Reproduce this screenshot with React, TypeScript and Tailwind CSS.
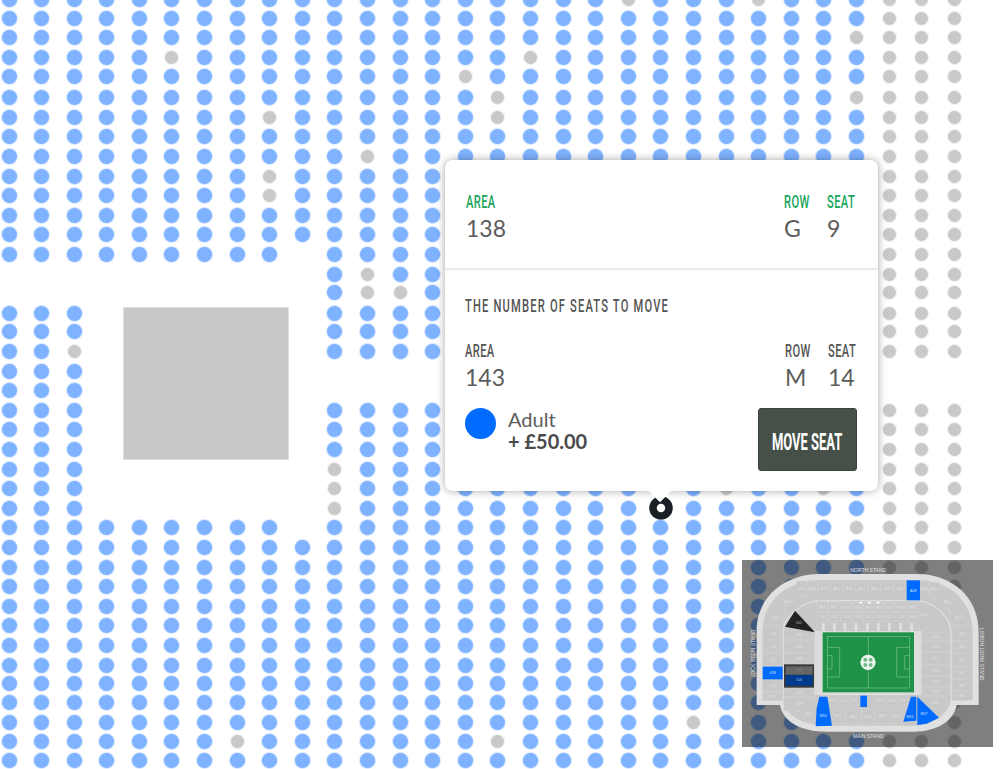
import React from 'react';

// seat map: 40 rows x 30 columns, "row:col" entries for the sold (grey) seats
const ROWS = 40;
const COLS = 30;
const SOLD = new Set([
    '0:19', '0:23', '2:26', '3:5', '3:16', '4:14', '5:15', '5:26', '6:8', '6:15', '8:11', '9:8', '10:8',
    '14:11', '15:11', '15:12', '18:2', '24:10', '25:10', '26:10', '25:22', '25:25', '27:26', '37:21', '38:7', '38:15',
]);

function isGap(r: number, c: number) {
    if (c <= 9 && (r === 14 || r === 15)) return true;
    if (c >= 3 && c <= 9 && r >= 16 && r <= 26) return true;
    if (c === 9 && (r === 13 || r === 27)) return true;
    if (c >= 10 && (r === 19 || r === 20)) return true;
    return false;
}

function Seat({r, c}: { r: number; c: number }) {
    if (isGap(r, c)) return <div/>;
    if (r === 26 && c === 20) {
        return (
            <div className="h-[15px] flex items-center justify-center">
                <svg width="24" height="24" viewBox="0 0 24 24" className="shrink-0">
                    <circle cx="12" cy="12" r="8" fill="none" stroke="#1a1f26" strokeWidth="7.5"/>
                </svg>
            </div>
        );
    }
    const sold = c >= 27 || SOLD.has(r + ':' + c);
    return (
        <div className="h-[15px] flex items-center justify-center">
            {sold
                ? <div className="w-[13px] h-[13px] rounded-full bg-[#c9c9c9] ring-1 ring-[#c9c9c9]/30"/>
                : <div className="w-[15px] h-[15px] rounded-full bg-[#7fb3ff] ring-1 ring-[#7fb3ff]/30"/>}
        </div>
    );
}

// the label font in the picture is a tall, very narrow display face
function Label({text, className, wide}: { text: string; className: string; wide?: boolean }) {
    return (
        <div className={"h-[16px] leading-[16px] text-[18px] font-medium whitespace-nowrap " + className}>
            <span className={"inline-block origin-left scale-x-[.62] font-['Roboto',sans-serif] " + (wide ? "tracking-[1.9px]" : "tracking-[0.6px]")}>{text}</span>
        </div>
    );
}

function Value({text}: { text: string }) {
    return <div className="mt-[5px] h-[28px] leading-[28px] text-[23px] text-[#5c5c5c] font-['Lato',sans-serif]">{text}</div>;
}

type Block = [number, number, number, number, string];

const BLOCKS: Block[] = [
    [170, 78, 32, 44, 'A25'], [204, 78, 28, 44, 'A26'], [234, 78, 36, 44, 'A01'], [272, 78, 36, 44, 'A02'],
    [310, 78, 36, 44, 'A03'], [348, 78, 36, 44, 'A04'], [386, 78, 36, 44, 'A05'], [424, 78, 36, 44, 'A06'],
    [462, 78, 36, 44, 'A07'], [540, 78, 26, 44, 'A09'], [568, 82, 30, 40, 'A10'],
    [230, 143, 33, 26, 'B01'], [265, 143, 33, 26, 'B02'], [300, 146, 33, 24, 'B03'], [335, 146, 33, 24, 'B04'],
    [370, 146, 30, 24, 'B05'], [402, 146, 30, 24, 'B06'], [434, 146, 32, 24, 'B07'], [468, 146, 32, 24, 'B08'], [502, 143, 30, 26, 'B09'],
    [232, 172, 32, 28, 'C01'], [267, 172, 33, 28, 'C02'], [302, 172, 33, 28, 'C03'], [337, 172, 30, 28, 'C04'],
    [369, 172, 30, 28, 'C05'], [401, 172, 30, 28, 'C06'], [433, 172, 32, 28, 'C07'], [467, 172, 32, 28, 'C08'], [501, 172, 32, 28, 'C09'],
    [68, 216, 60, 38, '443'], [68, 256, 60, 36, '444'], [68, 294, 60, 38, '445'], [68, 375, 60, 34, '438'], [68, 411, 60, 26, '437'],
    [132, 224, 90, 30, '502'], [132, 256, 90, 36, '503'], [132, 294, 90, 32, '504'], [132, 400, 90, 24, '507'], [132, 426, 90, 40, '508'],
    [545, 232, 85, 26, '512'], [545, 260, 85, 30, '513'], [545, 292, 85, 36, '514'], [545, 330, 85, 32, '515'],
    [545, 364, 85, 30, '516'], [545, 396, 85, 26, '517'], [545, 424, 75, 38, '518'],
    [636, 216, 60, 40, '464'], [636, 258, 60, 36, '465'], [636, 296, 60, 38, '466'], [636, 336, 60, 36, '467'],
    [636, 374, 60, 34, '468'], [636, 410, 60, 26, '469'],
    [264, 422, 30, 28, 'F50'], [296, 422, 30, 28, 'F51'], [328, 422, 30, 28, 'F52'], [404, 422, 32, 28, 'F55'],
    [438, 422, 32, 28, 'F56'], [472, 422, 30, 28, 'F57'],
    [276, 460, 36, 46, 'M51'], [316, 460, 48, 48, 'M52'], [366, 462, 36, 46, 'M53'], [404, 460, 46, 46, 'M54'], [452, 460, 36, 46, 'M55'],
];

const CORNERS: [string, number, number, string][] = [
    ['132,135 152,98 205,78 205,122 165,135 142,160', 143, 140, 'A24'],
    ['70,210 82,165 122,125 136,160 128,210', 105, 187, 'A23'],
    ['636,210 628,165 598,126 640,150 692,210', 655, 187, 'A12'],
    ['568,122 600,90 645,135 618,160', 622, 140, 'A11'],
    ['536,145 566,150 612,200 546,226 536,226', 553, 178, 'B10'],
    ['172,462 205,426 222,426 222,505 200,500', 205, 477, '509'],
];

function MapLabel({x, y, text, fill}: { x: number; y: number; text: string; fill: string }) {
    return <text x={x} y={y} textAnchor="middle" fontSize="11" fill={fill} fontFamily="Liberation Sans, sans-serif">{text}</text>;
}

function Minimap() {
    return (
        <div className="absolute left-[742px] top-[560px] w-[251px] h-[187px] bg-black/50">
            <svg width="251" height="187" viewBox="6 15 753 561" className="block">
                <path d="M50 450 L50 225 C50 130 130 57 240 57 L530 57 C640 57 716 130 716 230 L716 450 L650 450 C640 500 590 530 520 530 L260 530 C180 530 130 500 120 450 Z" fill="#e0e0e0"/>
                <path d="M68 435 L68 225 C68 140 140 75 240 75 L530 75 C630 75 698 140 698 230 L698 435 L632 435 C625 480 575 512 520 512 L260 512 C190 512 135 480 128 435 Z" fill="#c8c8c8"/>
                <path d="M131 440 L131 215 C135 190 180 140 240 137 L530 137 C590 140 630 190 633 230 L634 435" fill="none" stroke="#dedede" strokeWidth="4"/>
                {CORNERS.map(([points, x, y, label]) => (
                    <g key={label}>
                        <polygon points={points} fill="#c8c8c8" stroke="#d2d2d2" strokeWidth="1.5"/>
                        <MapLabel x={x} y={y + 4} text={label} fill="#e2e2e2"/>
                    </g>
                ))}
                {BLOCKS.map(([x, y, w, h, label]) => (
                    <g key={label}>
                        <rect x={x} y={y} width={w} height={h} fill="#c8c8c8" stroke="#d2d2d2" strokeWidth="1.5"/>
                        <MapLabel x={x + w / 2} y={y + h / 2 + 4} text={label} fill="#e2e2e2"/>
                    </g>
                ))}
                {[250, 283, 315, 348, 382, 415, 448, 482, 515].map(x => (
                    <rect key={x} x={x - 4} y={204} width={8} height={24} fill="#e0e0e0"/>
                ))}
                {[362, 388, 414].map(x => (
                    <polygon key={x} points={`${x - 7},141 ${x + 7},141 ${x},147`} fill="#ffffff"/>
                ))}

                {/* blue = seats available in this block, black = current block */}
                <rect x="500" y="76" width="40" height="60" fill="#006bff"/>
                <MapLabel x={520} y={110} text="A08" fill="#cfe2ff"/>
                <rect x="68" y="335" width="60" height="38" fill="#006bff"/>
                <MapLabel x={98} y={358} text="439" fill="#cfe2ff"/>
                <polygon points="238,425 262,425 276,512 227,514 230,460" fill="#006bff"/>
                <MapLabel x={250} y={487} text="M50" fill="#cfe2ff"/>
                <rect x="361" y="422" width="20" height="34" fill="#006bff"/>
                <polygon points="513,425 529,425 529,497 490,500" fill="#006bff"/>
                <MapLabel x={510} y={488} text="M56" fill="#cfe2ff"/>
                <polygon points="532,425 597,488 560,506 532,510" fill="#006bff"/>
                <MapLabel x={552} y={479} text="M57" fill="#cfe2ff"/>
                <polygon points="165,167 225,232 135,215" fill="#222222"/>
                <MapLabel x={177} y={208} text="501" fill="#bbbbbb"/>

                <rect x="132" y="328" width="90" height="70" fill="#3a3a3a"/>
                <rect x="137" y="334" width="81" height="25" fill="#666666"/>
                <rect x="137" y="360" width="81" height="32" fill="#003a8c"/>
                <MapLabel x={178} y={348} text="505" fill="#8a8a8a"/>
                <MapLabel x={178} y={379} text="506" fill="#a9c4ea"/>

                <rect x="224" y="228" width="320" height="192" fill="#dcdcdc"/>
                <rect x="248" y="232" width="274" height="180" fill="#1f9247"/>
                <g fill="none" stroke="#7cc394" strokeWidth="2">
                    <rect x="262" y="245" width="246" height="154"/>
                    <line x1="385" y1="245" x2="385" y2="399"/>
                    <path d="M262 277 L299 277 L299 366 L262 366"/>
                    <path d="M262 302 L276 302 L276 342 L262 342"/>
                    <path d="M508 277 L470 277 L470 366 L508 366"/>
                    <path d="M508 302 L494 302 L494 342 L508 342"/>
                </g>
                <circle cx="384" cy="322" r="23" fill="#eef6f0"/>
                <g fill="#6fbb8a">
                    <circle cx="376" cy="314" r="6"/>
                    <circle cx="392" cy="314" r="6"/>
                    <circle cx="376" cy="330" r="6"/>
                    <circle cx="392" cy="330" r="6"/>
                </g>

                <g fontSize="15" fill="#e2e2e2" fontFamily="Liberation Sans, sans-serif" textAnchor="middle">
                    <text x="385" y="52">NORTH STAND</text>
                    <text x="385" y="548">MAIN STAND</text>
                    <text transform="translate(46 295) rotate(-90)">JOCK STEIN STAND</text>
                    <text transform="translate(721 297) rotate(90)">LISBON LIONS STAND</text>
                </g>
            </svg>
        </div>
    );
}

function SeatPanel() {
    return (
        <div className="absolute left-[445px] top-[160px] w-[433px] h-[331px] bg-white rounded-lg shadow-[0_0_8px_rgba(0,0,0,0.35)] font-['Lato',sans-serif]">
            <div className="absolute left-[207px] -bottom-[8px] w-[16px] h-[16px] rotate-45 bg-white"/>
            <div className="relative h-[109px] pt-[33px] pl-[21px] pr-[22px] flex justify-between border-b border-[#e6e6e6] shadow-[0_1px_2px_rgba(0,0,0,0.08)]">
                <div>
                    <Label text="AREA" className="text-[#1ba55c]"/>
                    <Value text="138"/>
                </div>
                <div className="flex">
                    <div className="w-[43px]">
                        <Label text="ROW" className="text-[#1ba55c]"/>
                        <Value text="G"/>
                    </div>
                    <div className="w-[29px]">
                        <Label text="SEAT" className="text-[#1ba55c]"/>
                        <Value text="9"/>
                    </div>
                </div>
            </div>
            <div className="relative pt-[28px] pl-[20px] pr-[21px]">
                <Label text="THE NUMBER OF SEATS TO MOVE" className="text-[#555]" wide/>
                <div className="mt-[29px] flex justify-between">
                    <div>
                        <Label text="AREA" className="text-[#555]"/>
                        <Value text="143"/>
                    </div>
                    <div className="flex">
                        <div className="w-[43px]">
                            <Label text="ROW" className="text-[#555]"/>
                            <Value text="M"/>
                        </div>
                        <div className="w-[29px]">
                            <Label text="SEAT" className="text-[#555]"/>
                            <Value text="14"/>
                        </div>
                    </div>
                </div>
                <div className="mt-[17px] flex justify-between">
                    <div className="flex gap-[12px]">
                        <div className="w-[31px] h-[31px] rounded-full bg-[#006bff]"/>
                        <div className="text-[20px] leading-[22px] text-[#5c5c5c]">
                            <div>Adult</div>
                            <div className="font-bold text-[#4a4a4a]">+ £50.00</div>
                        </div>
                    </div>
                    <button className="w-[99px] h-[63px] rounded-[3px] bg-[#465049] border border-[#3c443f] text-white text-[24px] font-bold flex items-center justify-center whitespace-nowrap overflow-hidden">
                        <span className="inline-block scale-x-[.54] translate-y-[2px] font-['Roboto',sans-serif]">MOVE SEAT</span>
                    </button>
                </div>
            </div>
        </div>
    );
}

export default function App() {
    const cells = [];
    for (let r = 0; r < ROWS; r++) {
        for (let c = 0; c < COLS; c++) {
            cells.push(<Seat key={r + '-' + c} r={r} c={c}/>);
        }
    }
    return (
        <div className="relative w-[1000px] h-[769px] bg-white overflow-hidden">
            <div className="-mt-[8.5px] -ml-[7.3px] grid grid-cols-[repeat(30,32.6px)] grid-rows-[19px_19px_20px_19px_21px_20px_19px_20px_20px_19px_20px_19px_20px_20px_18px_21px_18px_20px_20px_19px_20px_19px_20px_20px_19px_20px_19px_20px_20px_19px_20px_19px_20px_20px_18px_19px_20px_19px_19px_20px]">
                {cells}
            </div>
            <div className="absolute left-[123px] top-[307px] w-[166px] h-[153px] bg-[#c8c8c8] border border-[#dedede]"/>
            <SeatPanel/>
            <Minimap/>
        </div>
    );
}
